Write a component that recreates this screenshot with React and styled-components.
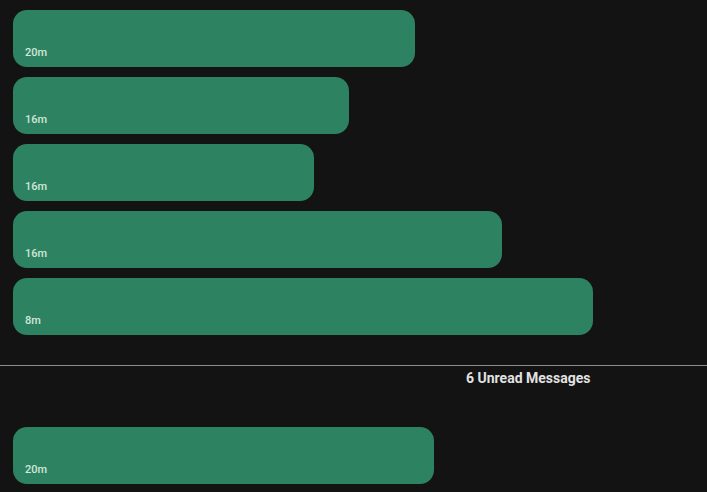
import React from 'react';
import styled, { createGlobalStyle } from 'styled-components';

const messages = [
  { width: 402, time: '20m' },
  { width: 336, time: '16m' },
  { width: 301, time: '16m' },
  { width: 489, time: '16m' },
  { width: 580, time: '8m' },
];

const unread = [{ width: 421, time: '20m' }];

const Global = createGlobalStyle`
  html, body {
    margin: 0;
    padding: 0;
    background: #131313;
    font-family: Roboto, "Liberation Sans", sans-serif;
    overflow: hidden;
  }
`;

const Page = styled.div`
  width: 707px;
  height: 492px;
  padding-top: 10px;
  box-sizing: border-box;
  background: #131313;
`;

const Stack = styled.div`
  display: flex;
  flex-direction: column;
  gap: 10px;
  padding-left: 13px;
`;

const Bubble = styled.div`
  width: ${(p) => p.$width}px;
  height: 57px;
  box-sizing: border-box;
  display: flex;
  align-items: flex-end;
  padding: 0 12px 8px;
  background: #2d8361;
  border-radius: 14px;
`;

const Time = styled.span`
  font-size: 11px;
  font-weight: 500;
  line-height: 13px;
  color: #d2e6da;
`;

const Divider = styled.div`
  margin: 30px 0 40px;
  display: flex;
  flex-direction: column;
`;

const Line = styled.div`
  height: 1px;
  background: #8c8c8c;
`;

const Label = styled.div`
  margin-top: 4px;
  padding-left: 466px;
  font-size: 14px;
  font-weight: 700;
  color: #e2e2e2;
  line-height: 17px;
`;

const List = ({ items }) => (
  <Stack>
    {items.map((m, i) => (
      <Bubble key={i} $width={m.width}>
        <Time>{m.time}</Time>
      </Bubble>
    ))}
  </Stack>
);

export default function App() {
  return (
    <>
      <Global />
      <Page>
        <List items={messages} />
        <Divider>
          <Line />
          <Label>6 Unread Messages</Label>
        </Divider>
        <List items={unread} />
      </Page>
    </>
  );
}
